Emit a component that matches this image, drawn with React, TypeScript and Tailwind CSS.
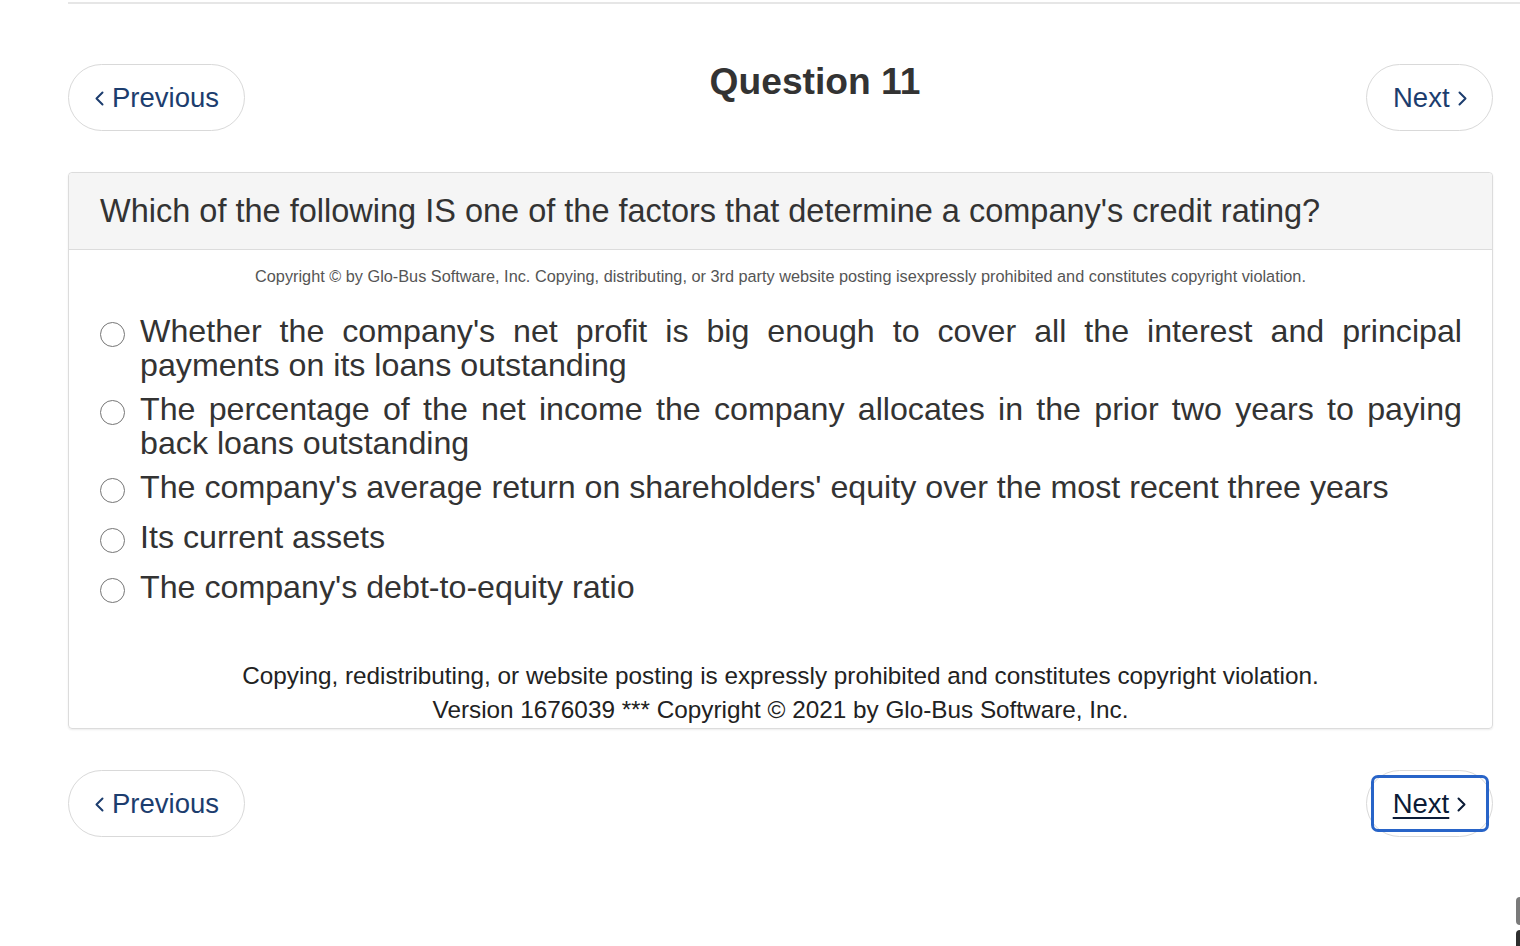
import React from 'react';

const options = [
  "Whether the company's net profit is big enough to cover all the interest and principal payments on its loans outstanding",
  'The percentage of the net income the company allocates in the prior two years to paying back loans outstanding',
  "The company's average return on shareholders' equity over the most recent three years",
  'Its current assets',
  "The company's debt-to-equity ratio",
];

function Chevron({ dir, className }: { dir: 'left' | 'right'; className?: string }) {
  const pts = dir === 'left' ? '7.5,1.5 1.5,7.5 7.5,13.5' : '1.5,1.5 7.5,7.5 1.5,13.5';
  return (
    <svg width="9" height="15" viewBox="0 0 9 15" className={className}>
      <polyline points={pts} fill="none" stroke="currentColor" strokeWidth="2" strokeLinecap="round" strokeLinejoin="round" />
    </svg>
  );
}

function PrevButton() {
  return (
    <button className="flex h-[67px] w-[177px] items-center gap-[8px] rounded-full border border-[#d9d9d9] bg-white pl-[26px] text-[27.5px] text-[#1c3d6e]">
      <Chevron dir="left" className="mt-[2px]" />
      <span className="mt-[1px]">Previous</span>
    </button>
  );
}

function NextButton({ focused }: { focused?: boolean }) {
  if (focused) {
    return (
      <button className="flex h-[67px] w-[127px] items-center justify-center rounded-full border border-[#d9d9d9] bg-white text-[27.5px] text-[#0b1b36]">
        <span className="flex h-[57px] w-[118px] items-center justify-center gap-[8px] rounded-[7px] border-[3px] border-[#2864c8]">
          <span className="mt-[1px] underline decoration-[2px] underline-offset-[4px]">Next</span>
          <Chevron dir="right" className="mt-[2px]" />
        </span>
      </button>
    );
  }
  return (
    <button className="flex h-[67px] w-[127px] items-center gap-[8px] rounded-full border border-[#d9d9d9] bg-white pl-[26px] text-[27.5px] text-[#1c3d6e]">
      <span className="mt-[1px]">Next</span>
      <Chevron dir="right" className="mt-[2px]" />
    </button>
  );
}

export default function App() {
  return (
    <div className="relative h-[946px] w-full overflow-hidden bg-white font-['Liberation_Sans',Arial,sans-serif] text-[#333]">
      <div className="ml-[68px] mt-[2px] h-[2px] bg-[#e6e6e6]" />

      <div className="ml-[68px] w-[1425px]">
        {/* top nav */}
        <div className="flex items-start pt-[58px]">
          <div className="mt-[2px]">
            <PrevButton />
          </div>
          <h1 className="mt-[1px] flex-1 pl-[19px] text-center text-[37.2px] font-bold leading-[37px] text-[#333]">Question 11</h1>
          <div className="mt-[2px]">
            <NextButton />
          </div>
        </div>

        {/* question panel */}
        <div className="mt-[41px] rounded-[4px] border border-[#dcdcdc] shadow-[0_1px_2px_rgba(0,0,0,0.08)]">
          <div className="flex h-[77px] items-center rounded-t-[4px] border-b border-[#dcdcdc] bg-[#f5f5f5] px-[31px] text-[32.5px] text-[#333]">
            Which of the following IS one of the factors that determine a company's credit rating?
          </div>

          <div className="pb-[1px]">
            <p className="pt-[16px] text-center text-[16.3px] leading-[20px] text-[#555]">
              Copyright © by Glo-Bus Software, Inc. Copying, distributing, or 3rd party website posting isexpressly prohibited and constitutes copyright violation.
            </p>

            <ul className="mt-[28px] flex flex-col gap-[10px] pl-[31px] pr-[30px]">
              {options.map((o) => (
                <li key={o} className="flex items-start">
                  <span className="mb-[7px] mt-[8px] h-[25px] w-[25px] shrink-0 rounded-full border-[1.5px] border-[#767676] bg-white" />
                  <span className="ml-[15px] text-justify text-[32.2px] leading-[34px] text-[#333]">{o}</span>
                </li>
              ))}
            </ul>

            <div className="mt-[49px] text-center text-[24.3px] leading-[34px] text-[#222]">
              <p>Copying, redistributing, or website posting is expressly prohibited and constitutes copyright violation.</p>
              <p>Version 1676039 *** Copyright © 2021 by Glo-Bus Software, Inc.</p>
            </div>
          </div>
        </div>

        {/* bottom nav */}
        <div className="mt-[41px] flex items-center justify-between">
          <PrevButton />
          <NextButton focused />
        </div>
      </div>

      <div className="absolute right-[-4px] top-[897px] h-[28px] w-[8px] rounded-[4px] bg-[#7a7a7a]" />
      <div className="absolute right-[-4px] top-[930px] h-[30px] w-[8px] rounded-[4px] bg-[#2e2e2e]" />
    </div>
  );
}
